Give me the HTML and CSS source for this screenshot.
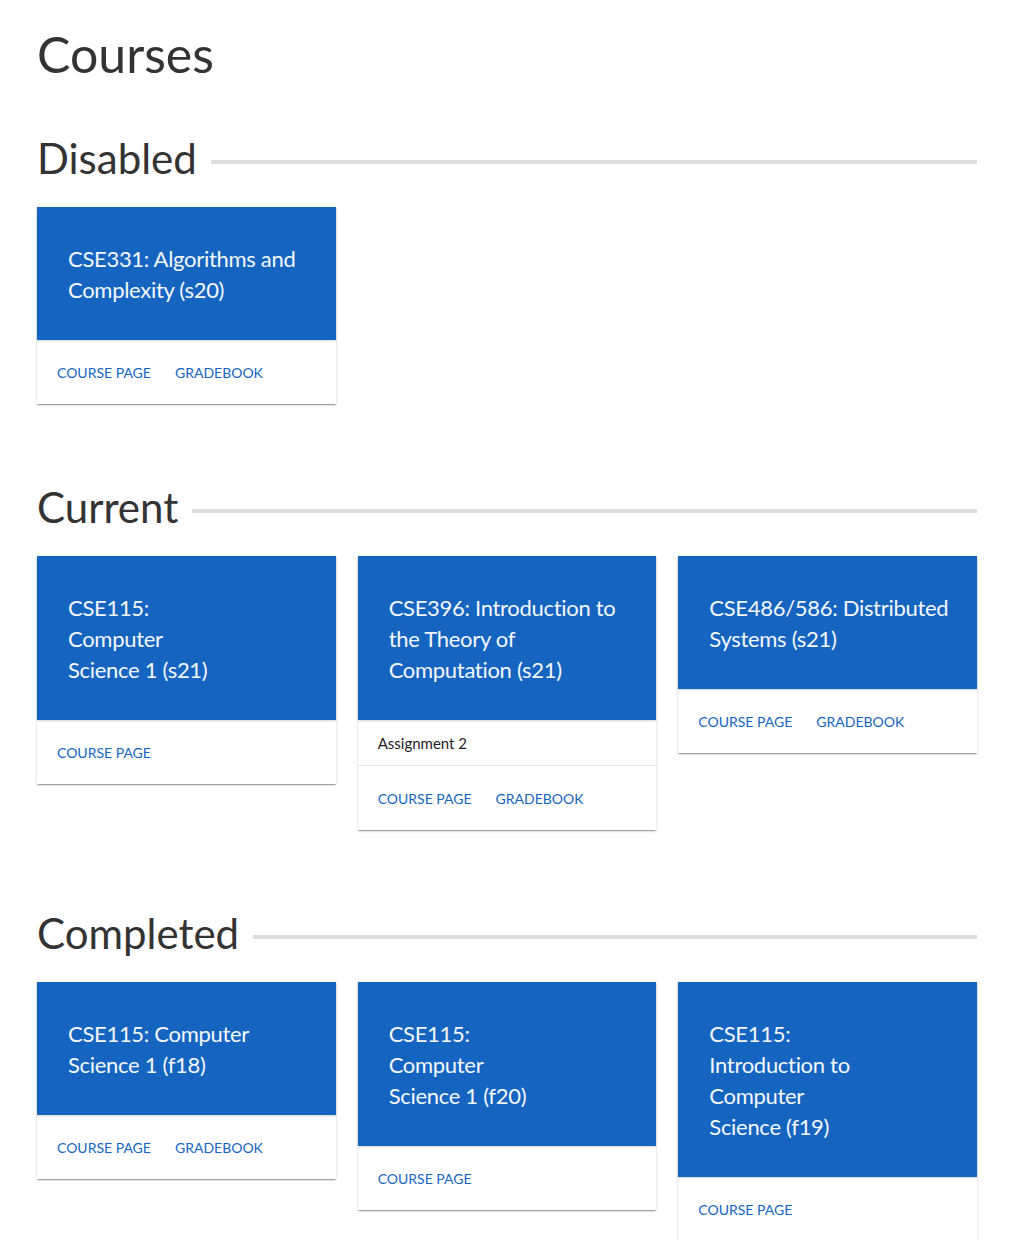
FILE: index.html
```html
<!DOCTYPE html>
<html lang="en">
<head>
<meta charset="utf-8">
<title>Courses</title>
<link rel="stylesheet" href="styles.css">
</head>
<body>
<main class="page">
  <h1 class="page-title">Courses</h1>

  <section class="group">
    <h2 class="group-heading"><span class="group-name">Disabled</span><span class="group-rule"></span></h2>
    <div class="cards">
      <article class="card">
        <div class="card-head">CSE331: Algorithms and<br>Complexity (s20)</div>
        <div class="card-actions"><a class="btn">Course Page</a><a class="btn">Gradebook</a></div>
      </article>
    </div>
  </section>

  <section class="group">
    <h2 class="group-heading"><span class="group-name">Current</span><span class="group-rule"></span></h2>
    <div class="cards">
      <article class="card">
        <div class="card-head">CSE115:<br>Computer<br>Science 1 (s21)</div>
        <div class="card-actions"><a class="btn">Course Page</a></div>
      </article>
      <article class="card">
        <div class="card-head">CSE396: Introduction to<br>the Theory of<br>Computation (s21)</div>
        <div class="card-note">Assignment 2</div>
        <div class="card-actions"><a class="btn">Course Page</a><a class="btn">Gradebook</a></div>
      </article>
      <article class="card">
        <div class="card-head">CSE486/586: Distributed<br>Systems (s21)</div>
        <div class="card-actions"><a class="btn">Course Page</a><a class="btn">Gradebook</a></div>
      </article>
    </div>
  </section>

  <section class="group">
    <h2 class="group-heading"><span class="group-name">Completed</span><span class="group-rule"></span></h2>
    <div class="cards">
      <article class="card">
        <div class="card-head">CSE115: Computer<br>Science 1 (f18)</div>
        <div class="card-actions"><a class="btn">Course Page</a><a class="btn">Gradebook</a></div>
      </article>
      <article class="card">
        <div class="card-head">CSE115:<br>Computer<br>Science 1 (f20)</div>
        <div class="card-actions"><a class="btn">Course Page</a></div>
      </article>
      <article class="card">
        <div class="card-head">CSE115:<br>Introduction to<br>Computer<br>Science (f19)</div>
        <div class="card-actions"><a class="btn">Course Page</a></div>
      </article>
    </div>
  </section>
</main>
</body>
</html>
```

FILE: styles.css
```css
html, body {
  margin: 0;
  padding: 0;
  background: #fff;
}

body {
  font-family: "Lato", "Liberation Sans", sans-serif;
  color: #333;
}

.page {
  width: 940px;
  padding: 22px 0 0 37px;
}

.page-title {
  margin: 0;
  font-size: 50px;
  line-height: 64px;
  font-weight: 400;
  color: #333;
}

.group {
  margin-top: 47px;
}

.group + .group {
  margin-top: 78px;
}

.group-heading {
  display: flex;
  align-items: center;
  margin: 0 0 24px;
  height: 50px;
  font-size: 42px;
  font-weight: 400;
  color: #333;
}

.group-name {
  line-height: 50px;
}

.group-rule {
  flex: 1;
  height: 4px;
  margin-left: 14px;
  margin-top: 7px;
  background: #dddddd;
}

.cards {
  display: grid;
  grid-template-columns: repeat(3, minmax(0, 1fr));
  column-gap: 22px;
  align-items: start;
}

.card {
  background: #fff;
  box-shadow: 0 2px 1px -1px rgba(0,0,0,.2), 0 1px 1px 0 rgba(0,0,0,.14), 0 1px 3px 0 rgba(0,0,0,.12);
}

.card-head {
  background: #1565c0;
  color: #f4f7fc;
  font-size: 22px;
  letter-spacing: -0.3px;
  line-height: 31px;
  white-space: nowrap;
  padding: 36px 31px 35px;
  box-shadow: 0 1px 2px rgba(0,0,0,.18);
  position: relative;
}

.card-note {
  height: 45px;
  display: flex;
  align-items: center;
  padding: 0 20px;
  border-bottom: 1px solid #e6e6e6;
  font-size: 15px;
  color: #1e1e1e;
}

.card-actions {
  height: 64px;
  display: flex;
  align-items: center;
  padding: 0 8px;
}

.btn {
  padding: 0 12px;
  font-size: 14px;
  text-transform: uppercase;
  color: #1565c0;
  cursor: pointer;
}
```
